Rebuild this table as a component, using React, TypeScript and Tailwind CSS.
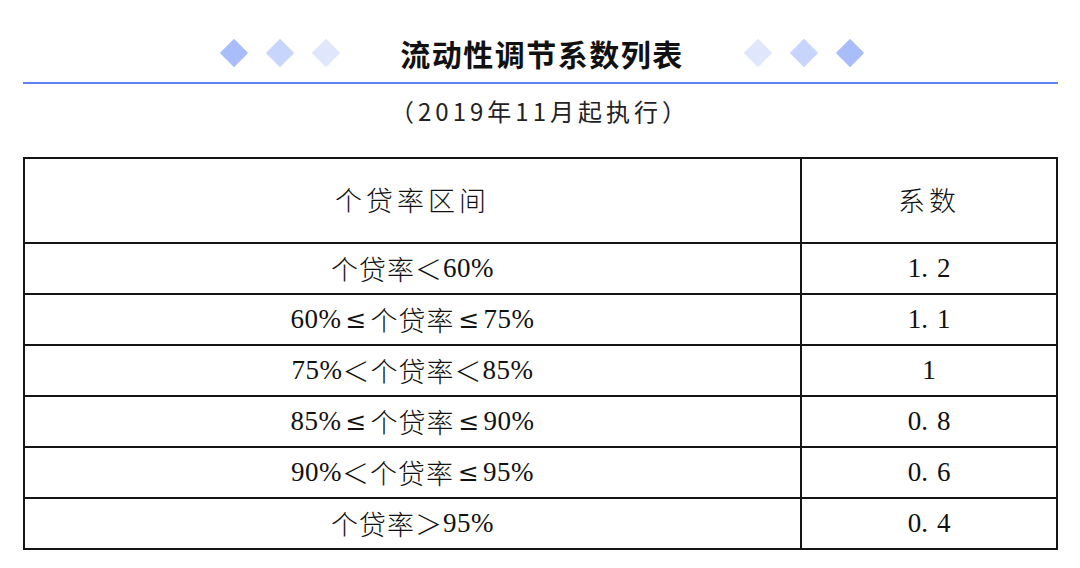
const rows = [
  { range: ["个贷率", "＜", "60%"], ratio: "1.2" },
  { range: ["60%", "≤", "个贷率", "≤", "75%"], ratio: "1.1" },
  { range: ["75%", "＜", "个贷率", "＜", "85%"], ratio: "1" },
  { range: ["85%", "≤", "个贷率", "≤", "90%"], ratio: "0.8" },
  { range: ["90%", "＜", "个贷率", "≤", "95%"], ratio: "0.6" },
  { range: ["个贷率", "＞", "95%"], ratio: "0.4" },
];

const serif = "font-['Liberation_Serif','Noto_Sans_CJK_SC',serif]";

function Diamonds({ colors }: { colors: string[] }) {
  return (
    <div className="flex items-center gap-[26px]">
      {colors.map((c, i) => (
        <div key={i} className={`w-5 h-5 rotate-45 ${c}`} />
      ))}
    </div>
  );
}

function Ratio({ value }: { value: string }) {
  const [a, b] = value.split(".");
  if (b === undefined) return <span>{a}</span>;
  return (
    <span>
      {a}
      <span className="mr-[9px]">.</span>
      {b}
    </span>
  );
}

function Range({ parts }: { parts: string[] }) {
  return (
    <span className="flex items-center">
      {parts.map((p, i) =>
        p === "≤" ? (
          <span key={i} className="inline-block w-[29px] text-center font-['DejaVu_Serif',serif] text-[25px]">
            {p}
          </span>
        ) : /\d/.test(p) ? (
          <span key={i} className="font-['Liberation_Serif',serif] tracking-[0.5px]">
            {p}
          </span>
        ) : (
          <span key={i} className="font-['Noto_Sans_CJK_SC',sans-serif] font-light tracking-[1px]">
            {p}
          </span>
        ),
      )}
    </span>
  );
}

export default function App() {
  return (
    <div className="w-[1080px] h-[568px] bg-white pt-[24px] px-[22px] text-[#111]">
      <div className="h-[58px] pl-[4px] flex items-center justify-center">
        <Diamonds colors={["bg-[#a9bdfb]", "bg-[#c7d4fc]", "bg-[#e0e7fd]"]} />
        <h1 className="mx-[64px] text-[30px] font-bold tracking-[1.5px] font-['Noto_Sans_CJK_SC',sans-serif] text-[#111]">
          流动性调节系数列表
        </h1>
        <Diamonds colors={["bg-[#e0e7fd]", "bg-[#c7d4fc]", "bg-[#a9bdfb]"]} />
      </div>
      <div className="h-[2px] bg-[#5d82f4] ml-px" />
      <p className="mt-[10px] h-[34px] flex items-center justify-center text-[24px] leading-none tracking-[4px] text-[#222] font-['Noto_Sans_CJK_SC',sans-serif]">
        （2019年11月起执行）
      </p>
      <div className={`mt-[29px] ml-px border-2 border-[#151515] ${serif} text-[27px] leading-none`}>
        <div className="flex h-[83px]">
          <div className="w-[777px] pb-[2px] border-r-2 border-[#151515] flex items-center justify-center tracking-[4px] font-['Noto_Sans_CJK_SC',sans-serif] font-light">
            个贷率区间
          </div>
          <div className="flex-1 pb-[2px] flex items-center justify-center tracking-[4px] font-['Noto_Sans_CJK_SC',sans-serif] font-light">
            系数
          </div>
        </div>
        {rows.map((r) => (
          <div key={r.ratio + r.range.join("")} className="flex h-[51px] border-t-2 border-[#151515]">
            <div className="w-[777px] border-r-2 border-[#151515] flex items-center justify-center">
              <Range parts={r.range} />
            </div>
            <div className="flex-1 flex items-center justify-center">
              <Ratio value={r.ratio} />
            </div>
          </div>
        ))}
      </div>
    </div>
  );
}
